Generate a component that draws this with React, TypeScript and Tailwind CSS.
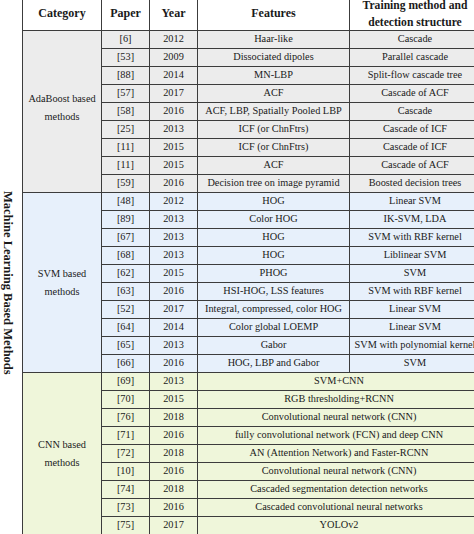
import React from "react";

type Row = [string, string, string, string?];

const ada: Row[] = [
  ["[6]", "2012", "Haar-like", "Cascade"],
  ["[53]", "2009", "Dissociated dipoles", "Parallel cascade"],
  ["[88]", "2014", "MN-LBP", "Split-flow cascade tree"],
  ["[57]", "2017", "ACF", "Cascade of ACF"],
  ["[58]", "2016", "ACF, LBP, Spatially Pooled LBP", "Cascade"],
  ["[25]", "2013", "ICF (or ChnFtrs)", "Cascade of ICF"],
  ["[11]", "2015", "ICF (or ChnFtrs)", "Cascade of ICF"],
  ["[11]", "2015", "ACF", "Cascade of ACF"],
  ["[59]", "2016", "Decision tree on image pyramid", "Boosted decision trees"],
];

const svm: Row[] = [
  ["[48]", "2012", "HOG", "Linear SVM"],
  ["[89]", "2013", "Color HOG", "IK-SVM, LDA"],
  ["[67]", "2013", "HOG", "SVM with RBF kernel"],
  ["[68]", "2013", "HOG", "Liblinear SVM"],
  ["[62]", "2015", "PHOG", "SVM"],
  ["[63]", "2016", "HSI-HOG, LSS features", "SVM with RBF kernel"],
  ["[52]", "2017", "Integral, compressed, color HOG", "Linear SVM"],
  ["[64]", "2014", "Color global LOEMP", "Linear SVM"],
  ["[65]", "2013", "Gabor", "SVM with polynomial kernel"],
  ["[66]", "2016", "HOG, LBP and Gabor", "SVM"],
];

const cnn: Row[] = [
  ["[69]", "2013", "SVM+CNN"],
  ["[70]", "2015", "RGB thresholding+RCNN"],
  ["[76]", "2018", "Convolutional neural network (CNN)"],
  ["[71]", "2016", "fully convolutional network (FCN) and deep CNN"],
  ["[72]", "2018", "AN (Attention Network) and Faster-RCNN"],
  ["[10]", "2016", "Convolutional neural network (CNN)"],
  ["[74]", "2018", "Cascaded segmentation detection networks"],
  ["[73]", "2016", "Cascaded convolutional neural networks"],
  ["[75]", "2017", "YOLOv2"],
];

const cell =
  "flex items-center justify-center border-r border-b border-[#3c3c3c] h-[18px] whitespace-nowrap overflow-visible";

function Section({
  title,
  rows,
  bg,
  merged,
  extra,
}: {
  title: string;
  rows: Row[];
  bg: string;
  merged?: boolean;
  extra?: string;
}) {
  return (
    <div className={`flex ${bg}`}>
      <div
        className={`w-[79px] shrink-0 flex items-center justify-center border-r border-b border-[#3c3c3c] ${extra ?? ""}`}
      >
        <div className="text-center leading-[18px]">
          {title}
          <br />
          methods
        </div>
      </div>
      <div className="flex flex-col">
        {rows.map((r, i) =>
          merged ? (
            <div key={i} className="grid grid-cols-[48px_48px_283px]">
              <div className={cell}>{r[0]}</div>
              <div className={cell}>{r[1]}</div>
              <div className={cell}>{r[2]}</div>
            </div>
          ) : (
            <div key={i} className="grid grid-cols-[48px_48px_152px_131px]">
              <div className={cell}>{r[0]}</div>
              <div className={cell}>{r[1]}</div>
              <div className={cell}>{r[2]}</div>
              <div className={cell}>{r[3]}</div>
            </div>
          )
        )}
      </div>
    </div>
  );
}

export default function App() {
  const head =
    "flex items-center justify-center border-r border-b border-[#3c3c3c] h-[31px] pb-[4px] whitespace-nowrap";
  return (
    <div className="w-[474px] h-[534px] overflow-hidden bg-white text-[#1a1a1a] [font-family:'Liberation_Serif','Times_New_Roman',serif] text-[10.3px] leading-none">
      <div className="flex w-[540px]">
        <div className="w-[22px] shrink-0 flex flex-col">
          <div className="h-[31px] shrink-0" />
          <div className="flex-1 flex items-center justify-center pr-[6px]">
            <div className="[writing-mode:vertical-rl] font-bold text-[12.5px] whitespace-nowrap leading-none">
              Machine Learning Based Methods
            </div>
          </div>
        </div>
        <div className="border-l border-[#3c3c3c] flex flex-col shrink-0">
          <div className="grid grid-cols-[79px_48px_48px_152px_131px] bg-white font-bold text-[12px]">
            <div className={head}>Category</div>
            <div className={head}>Paper</div>
            <div className={head}>Year</div>
            <div className={head}>Features</div>
            <div className="flex items-center justify-center border-r border-b border-[#3c3c3c] h-[31px] pb-[2px] overflow-visible">
              <div className="text-center leading-[17px] text-[11.6px] whitespace-nowrap">
                Training method and
                <br />
                detection structure
              </div>
            </div>
          </div>
          <Section title="AdaBoost based" rows={ada} bg="bg-[#ececec]" extra="pb-[8px]" />
          <Section title="SVM based" rows={svm} bg="bg-[#e7f0fb]" />
          <Section title="CNN based" rows={cnn} bg="bg-[#eff6da]" merged />
        </div>
      </div>
    </div>
  );
}
